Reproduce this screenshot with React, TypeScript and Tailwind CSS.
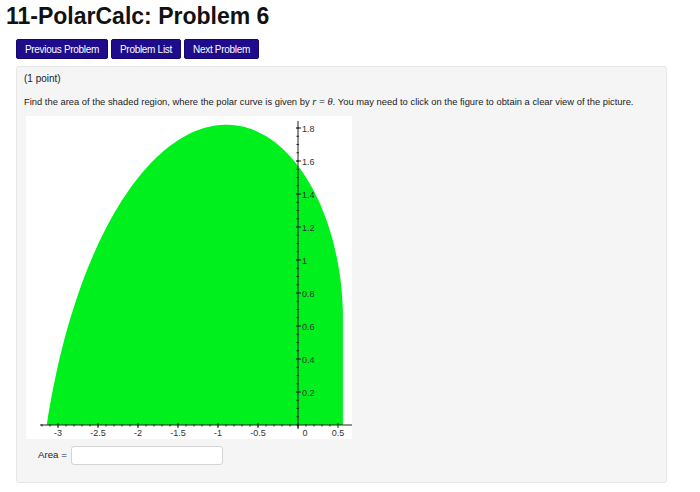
import React from 'react';

const OX = 272;
const OY = 309;
const SX = 80;
const SY = 165;

const px = (x: number) => OX + x * SX;
const py = (y: number) => OY - y * SY;

// shaded region under r = θ, from the rightmost point to θ = π
const regionPath = () => {
  const t0 = 0.86;
  const pts: string[] = [`M${px(t0 * Math.cos(t0)).toFixed(1)} ${OY}`];
  for (let i = 0; i <= 120; i++) {
    const t = t0 + ((Math.PI - t0) * i) / 120;
    pts.push(`L${px(t * Math.cos(t)).toFixed(1)} ${py(t * Math.sin(t)).toFixed(1)}`);
  }
  return pts.join(' ') + ' Z';
};

const PolarPlot = () => {
  const xMinor = Array.from({ length: 37 }, (_, i) => -3.2 + i * 0.1);
  const xLabels = [-3, -2.5, -2, -1.5, -1, -0.5, 0, 0.5];
  const yMinor = Array.from({ length: 37 }, (_, i) => i * 0.05);
  const yLabels = [0.2, 0.4, 0.6, 0.8, 1, 1.2, 1.4, 1.6, 1.8];

  return (
    <svg width="326" height="323" viewBox="0 0 326 323" className="block bg-white">
      <path d={regionPath()} fill="#00f01e" />
      <g stroke="#222" strokeWidth="1">
        <line x1="14" y1={OY} x2="326" y2={OY} />
        <line x1={OX} y1="5" x2={OX} y2="313" />
        {xMinor.map((v, i) => (
          <line key={'xm' + i} x1={px(v)} y1={OY - 1} x2={px(v)} y2={OY + 1.5} />
        ))}
        {xLabels.map((v) => (
          <line key={'xl' + v} x1={px(v)} y1={OY - 2} x2={px(v)} y2={OY + 3} />
        ))}
        {yMinor.map((v, i) => (
          <line key={'ym' + i} x1={OX - 1.5} y1={py(v)} x2={OX + 1} y2={py(v)} />
        ))}
        {yLabels.map((v) => (
          <line key={'yl' + v} x1={OX - 2} y1={py(v)} x2={OX + 3} y2={py(v)} />
        ))}
      </g>
      <g fill="#333" fontSize="9" fontFamily="'Liberation Sans', Arial, sans-serif">
        {xLabels.map((v) => (
          <text key={'xt' + v} x={v === 0 ? px(v) + 7 : px(v)} y={OY + 11} textAnchor="middle">
            {v}
          </text>
        ))}
        {yLabels.map((v) => (
          <text key={'yt' + v} x={OX + 4} y={py(v) + 3.5}>
            {v}
          </text>
        ))}
      </g>
    </svg>
  );
}

export default function App() {
  return (
    <div className="w-[700px] h-[492px] bg-white text-[#333] font-['Liberation_Sans',Arial,sans-serif] overflow-hidden">
      <h1 className="pl-[6px] pt-[3px] text-[23px] leading-[26px] font-bold text-[#111]">
        11-PolarCalc: Problem 6
      </h1>
      <div className="flex gap-[3px] pl-[16px] mt-[10px]">
        <NavButton label="Previous Problem" width="w-[92px]" />
        <NavButton label="Problem List" width="w-[70px]" />
        <NavButton label="Next Problem" width="w-[75px]" />
      </div>
      <div className="ml-[16px] mt-[7px] w-[651px] h-[417px] bg-[#f5f5f5] border border-[#e6e6e6] rounded-[3px] px-[7px] pt-[5px]">
        <p className="text-[10px] leading-[13px] text-[#222]">(1 point)</p>
        <p className="mt-[11px] text-[9.4px] leading-[12px] text-[#222] whitespace-nowrap">
          Find the area of the shaded region, where the polar curve is given by{' '}
          <span className="font-['Liberation_Serif',serif] italic text-[10.5px]">r</span>{' '}
          <span className="font-['Liberation_Serif',serif] text-[10.5px]">=</span>{' '}
          <span className="font-['Liberation_Serif',serif] italic text-[10.5px]">θ</span>. You may need to click on the figure to obtain a clear view of the picture.
        </p>
        <div className="mt-[8px] ml-[2px]">
          <PolarPlot />
        </div>
        <div className="flex items-center mt-[7px] ml-[14px] gap-[4px]">
          <span className="text-[9.7px] text-[#222]">Area =</span>
          <input
            type="text"
            className="w-[152px] h-[19px] bg-white border border-[#d4d4d4] rounded-[3px] outline-none"
          />
        </div>
      </div>
    </div>
  );
}

const NavButton = ({ label, width }: { label: string; width: string }) => (
  <button
    className={`${width} h-[20px] bg-[#1e0c8c] border border-[#14086a] rounded-[2px] text-white text-[10px] tracking-[-0.3px] flex items-center justify-center`}
  >
    {label}
  </button>
);
